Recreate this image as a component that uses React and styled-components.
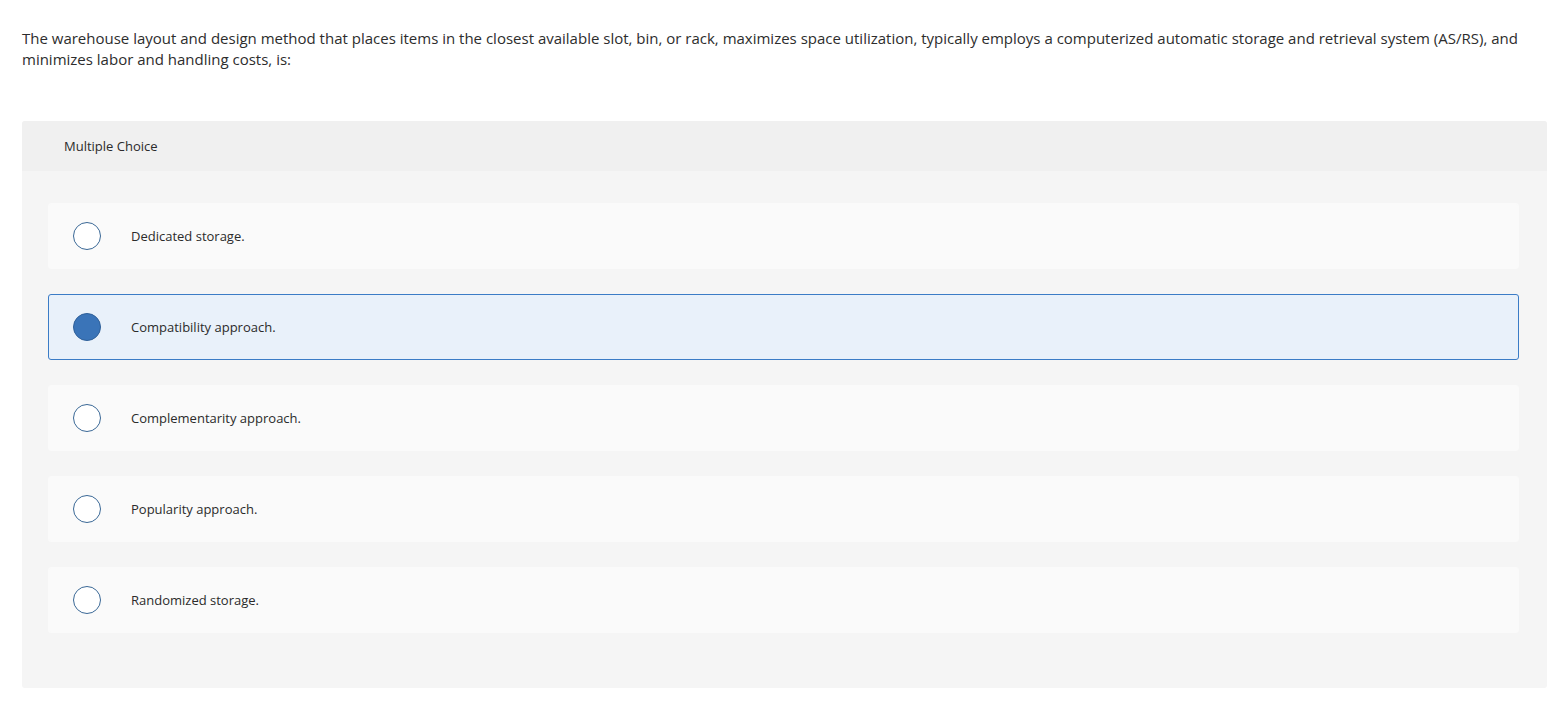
import React, { useState } from "react";
import styled, { createGlobalStyle } from "styled-components";

const Global = createGlobalStyle`
  html, body { margin: 0; padding: 0; background: #fff; }
  body { font-family: "Open Sans", Lato, sans-serif; color: #2b2b2b; }
`;

const Page = styled.div`
  padding: 28px 15px 14px 22px;
`;

const Question = styled.p`
  margin: 0 0 51px 0;
  font-size: 15px;
  line-height: 21px;
  color: #2d2d2d;
  padding-right: 20px;
`;

const Panel = styled.section`
  background: #f5f5f5;
  border-radius: 3px;
  overflow: hidden;
`;

const PanelHeader = styled.div`
  height: 50px;
  background: #f0f0f0;
  display: flex;
  align-items: center;
  padding-left: 42px;
  font-size: 13px;
  color: #2b2b2b;
`;

const Options = styled.div`
  display: flex;
  flex-direction: column;
  gap: 25px;
  padding: 32px 28px 55px 26px;
`;

const Option = styled.label`
  height: 66px;
  box-sizing: border-box;
  display: flex;
  align-items: center;
  gap: 30px;
  border-radius: 3px;
  background: ${(p) => (p.$selected ? "#e9f1fa" : "#fafafa")};
  border: 1px solid ${(p) => (p.$selected ? "#3b7cc6" : "#fafafa")};
  padding-left: 24px;
  cursor: pointer;
  font-size: 13px;
  color: #2b2b2b;
`;

const Radio = styled.span`
  width: 28px;
  height: 28px;
  box-sizing: border-box;
  border-radius: 50%;
  border: 1.5px solid ${(p) => (p.$selected ? "#2f6099" : "#3a6896")};
  background: ${(p) => (p.$selected ? "#3a74b8" : "#fff")};
  flex: none;
`;

const choices = [
  "Dedicated storage.",
  "Compatibility approach.",
  "Complementarity approach.",
  "Popularity approach.",
  "Randomized storage.",
];

export default function App() {
  const [sel, setSel] = useState(1);
  return (
    <>
      <Global />
      <Page>
        <Question>
          The warehouse layout and design method that places items in the closest available slot, bin, or rack,
          maximizes space utilization, typically employs a computerized automatic storage and retrieval system
          (AS/RS), and minimizes labor and handling costs, is:
        </Question>
        <Panel>
          <PanelHeader>Multiple Choice</PanelHeader>
          <Options>
            {choices.map((c, i) => (
              <Option key={c} $selected={sel === i} onClick={() => setSel(i)}>
                <Radio $selected={sel === i} />
                {c}
              </Option>
            ))}
          </Options>
        </Panel>
      </Page>
    </>
  );
}
